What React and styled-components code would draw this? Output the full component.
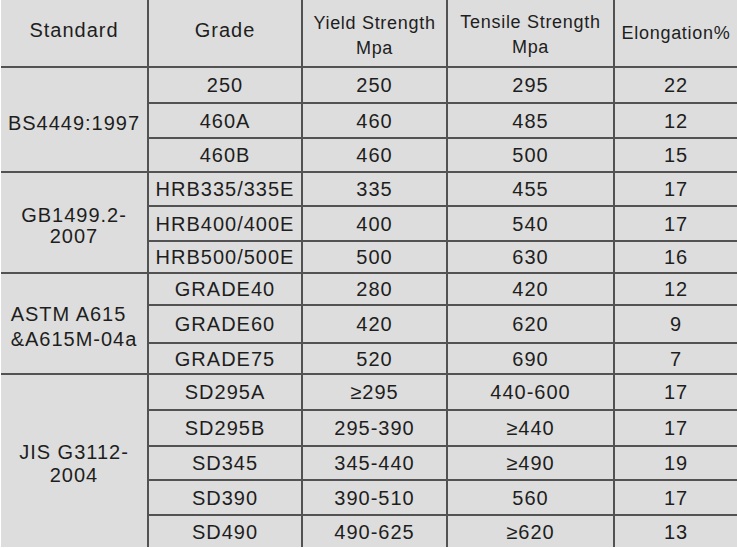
import React from 'react';
import styled, { createGlobalStyle } from 'styled-components';

const GlobalStyle = createGlobalStyle`
  html, body {
    margin: 0;
    padding: 0;
    background: #fff;
  }
  body {
    font-family: "Liberation Sans", Arial, sans-serif;
  }
`;

const groups = [
  {
    standard: ['BS4449:1997'],
    lineHeight: 22,
    rows: [
      ['250', '250', '295', '22', 36],
      ['460A', '460', '485', '12', 35],
      ['460B', '460', '500', '15', 34],
    ],
  },
  {
    standard: ['GB1499.2-', '2007'],
    lineHeight: 21,
    rows: [
      ['HRB335/335E', '335', '455', '17', 34],
      ['HRB400/400E', '400', '540', '17', 35],
      ['HRB500/500E', '500', '630', '16', 32],
    ],
  },
  {
    standard: ['ASTM A615', '&A615M-04a'],
    lineHeight: 25,
    align: 'left',
    rows: [
      ['GRADE40', '280', '420', '12', 32],
      ['GRADE60', '420', '620', '9', 38],
      ['GRADE75', '520', '690', '7', 31],
    ],
  },
  {
    standard: ['JIS G3112-', '2004'],
    lineHeight: 23,
    rows: [
      ['SD295A', '≥295', '440-600', '17', 36],
      ['SD295B', '295-390', '≥440', '17', 36],
      ['SD345', '345-440', '≥490', '19', 34],
      ['SD390', '390-510', '560', '17', 35],
      ['SD490', '490-625', '≥620', '13', 31],
    ],
  },
];

const columns = [148, 154, 145, 167, 122];

const Page = styled.div`
  padding-left: 1px;
`;

const Table = styled.table`
  width: 736px;
  table-layout: fixed;
  border-collapse: separate;
  border-spacing: 0;
  background: #dddddd;
  color: #1e1e1e;
  font-size: 20px;
  letter-spacing: 1px;
`;

const Row = styled.tr`
  height: ${p => p.$h}px;
`;

const Cell = styled.td`
  padding: 0;
  text-align: center;
  vertical-align: middle;
  line-height: 22px;
  white-space: nowrap;
  border-right: 2px solid #525252;
  border-bottom: ${p => (p.$last ? 'none' : '2px solid #525252')};

  &:last-child {
    border-right: none;
  }
`;

const HeadCell = styled.th`
  padding: ${p => p.$pt}px 0 ${p => p.$pb}px;
  font-weight: normal;
  text-align: center;
  vertical-align: middle;
  font-size: ${p => (p.$small ? 18 : 20)}px;
  letter-spacing: ${p => (p.$small ? 0.7 : 1)}px;
  line-height: 25px;
  white-space: nowrap;
  border-right: 2px solid #525252;
  border-bottom: 2px solid #525252;

  &:last-child {
    border-right: none;
  }
`;

const StandardText = styled.span`
  display: inline-block;
  text-align: ${p => p.$align || 'center'};
  line-height: ${p => p.$lh}px;
  padding-top: 6px;
`;

const headers = [
  { label: ['Standard'], pt: 0, pb: 6 },
  { label: ['Grade'], pt: 0, pb: 6 },
  { label: ['Yield Strength', 'Mpa'], small: true, pt: 6, pb: 0 },
  { label: ['Tensile Strength', 'Mpa'], small: true, pt: 4, pb: 0 },
  { label: ['Elongation%'], small: true, pt: 0, pb: 0 },
];

const App = () => {
  return (
    <Page>
      <GlobalStyle />
      <Table>
        <colgroup>
          {columns.map((w, i) => (
            <col key={i} style={{ width: w }} />
          ))}
        </colgroup>
        <thead>
          <Row $h={68}>
            {headers.map((h, i) => (
              <HeadCell key={i} $small={h.small} $pt={h.pt} $pb={h.pb}>
                {h.label.map((line, j) => (
                  <React.Fragment key={j}>
                    {j > 0 && <br />}
                    {line}
                  </React.Fragment>
                ))}
              </HeadCell>
            ))}
          </Row>
        </thead>
        <tbody>
          {groups.map((group, gi) => {
            const lastGroup = gi === groups.length - 1;
            return group.rows.map((row, ri) => {
              const lastRow = lastGroup && ri === group.rows.length - 1;
              const [grade, yieldS, tensile, elong, h] = row;
              return (
                <Row key={`${gi}-${ri}`} $h={h}>
                  {ri === 0 && (
                    <Cell rowSpan={group.rows.length} $last={lastGroup}>
                      <StandardText $align={group.align} $lh={group.lineHeight}>
                        {group.standard.map((line, j) => (
                          <React.Fragment key={j}>
                            {j > 0 && <br />}
                            {line}
                          </React.Fragment>
                        ))}
                      </StandardText>
                    </Cell>
                  )}
                  <Cell $last={lastRow}>{grade}</Cell>
                  <Cell $last={lastRow}>{yieldS}</Cell>
                  <Cell $last={lastRow}>{tensile}</Cell>
                  <Cell $last={lastRow}>{elong}</Cell>
                </Row>
              );
            });
          })}
        </tbody>
      </Table>
    </Page>
  );
};

export default App;
